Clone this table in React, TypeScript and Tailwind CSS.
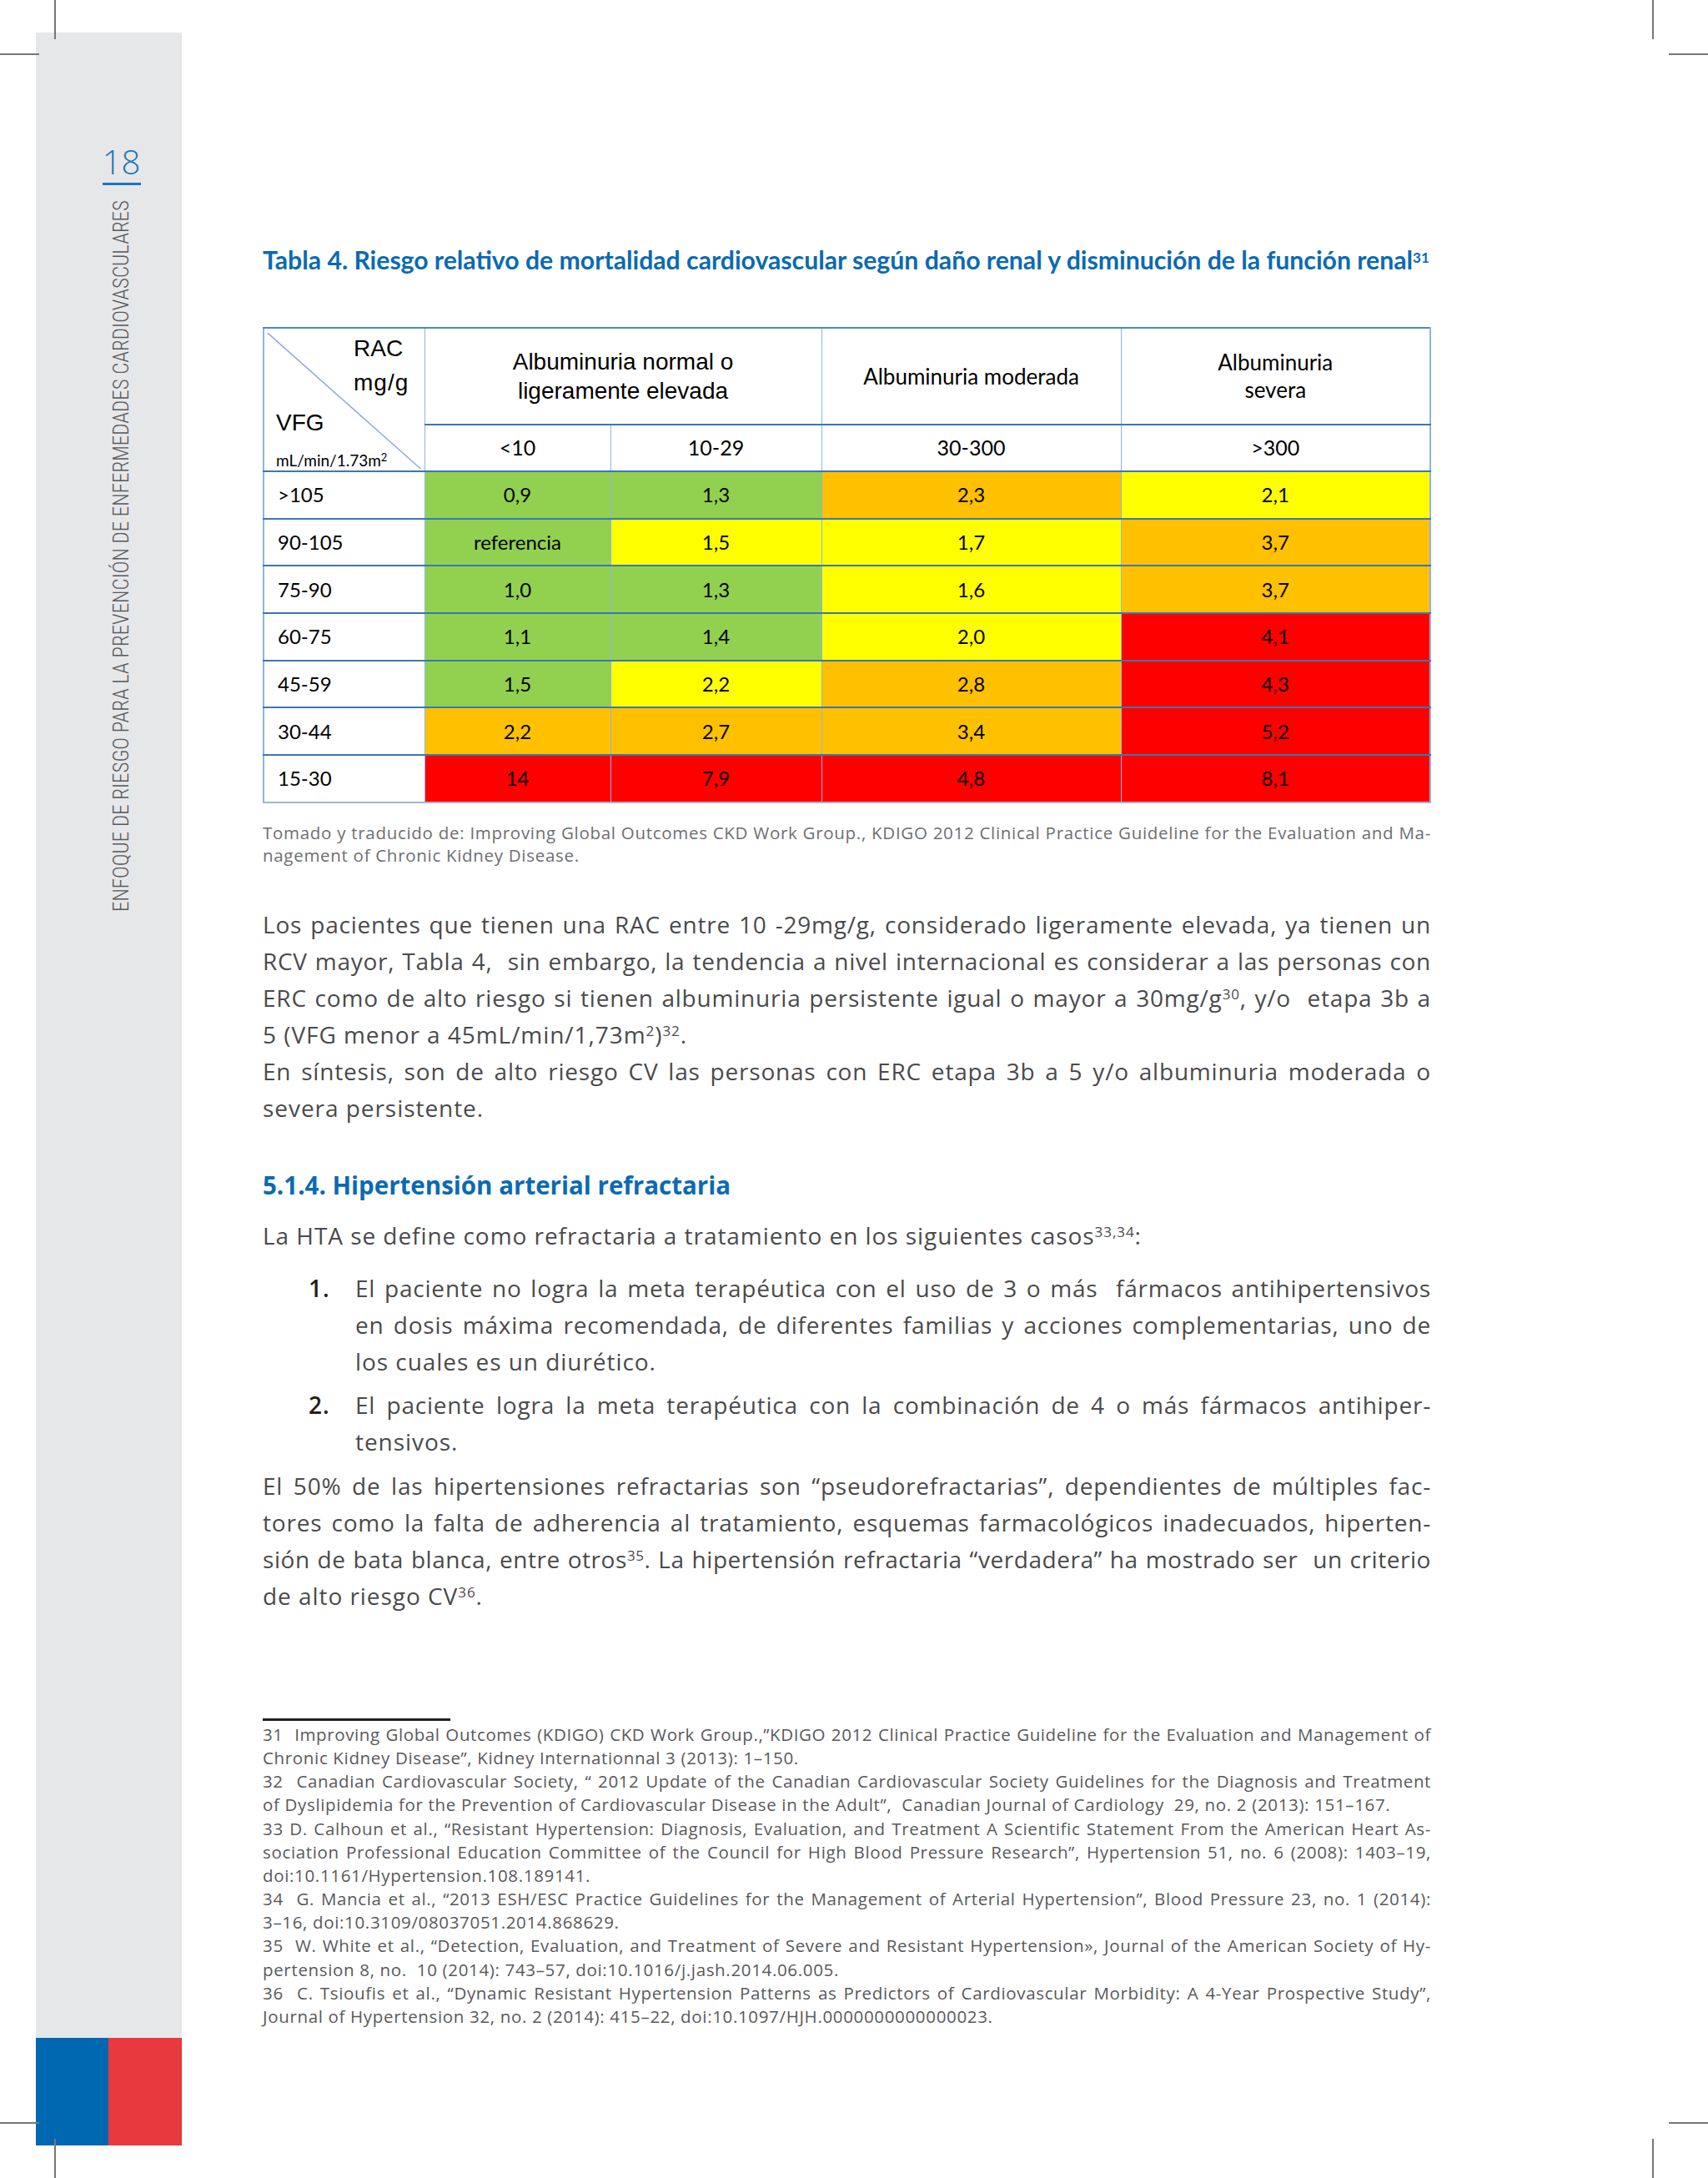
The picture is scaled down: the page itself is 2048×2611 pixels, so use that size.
import { JSX, ReactNode } from "react";

const cellColor: Record<string, string> = {
  g: "bg-[#92d050]",
  y: "bg-[#ffff00]",
  o: "bg-[#ffc000]",
  r: "bg-[#ff0000]",
};

const rows: [string, [string, string][]][] = [
  [">105", [["0,9", "g"], ["1,3", "g"], ["2,3", "o"], ["2,1", "y"]]],
  ["90-105", [["referencia", "g"], ["1,5", "y"], ["1,7", "y"], ["3,7", "o"]]],
  ["75-90", [["1,0", "g"], ["1,3", "g"], ["1,6", "y"], ["3,7", "o"]]],
  ["60-75", [["1,1", "g"], ["1,4", "g"], ["2,0", "y"], ["4,1", "r"]]],
  ["45-59", [["1,5", "g"], ["2,2", "y"], ["2,8", "o"], ["4,3", "r"]]],
  ["30-44", [["2,2", "o"], ["2,7", "o"], ["3,4", "o"], ["5,2", "r"]]],
  ["15-30", [["14", "r"], ["7,9", "r"], ["4,8", "r"], ["8,1", "r"]]],
];

const vb = "border-x border-x-[#8db4e2]";
const hb = "border-b-2 border-b-[#3b77b2]";

function Line({ children, last = false, className = "" }: { children: ReactNode; last?: boolean; className?: string }): JSX.Element {
  return (
    <div className={`${last ? "whitespace-nowrap" : "whitespace-nowrap text-justify [text-align-last:justify]"} ${className}`}>
      {children}
    </div>
  );
}

function CropMarks(): JSX.Element {
  return (
    <>
      <div className="absolute left-[65px] top-0 h-[47px] w-[2px] bg-[#777]" />
      <div className="absolute left-0 top-[64px] h-[2px] w-[47px] bg-[#777]" />
      <div className="absolute left-[1981px] top-0 h-[47px] w-[2px] bg-[#777]" />
      <div className="absolute left-[2001px] top-[64px] h-[2px] w-[47px] bg-[#777]" />
      <div className="absolute left-0 top-[2544px] h-[2px] w-[47px] bg-[#777]" />
      <div className="absolute left-[65px] top-[2564px] h-[47px] w-[2px] bg-[#777]" />
      <div className="absolute left-[2001px] top-[2544px] h-[2px] w-[47px] bg-[#777]" />
      <div className="absolute left-[1981px] top-[2564px] h-[47px] w-[2px] bg-[#777]" />
    </>
  );
}

function Sidebar(): JSX.Element {
  return (
    <aside className="ml-[43px] mt-[39px] flex w-[175px] shrink-0 flex-col">
      <div className="flex h-[2404px] flex-col items-center bg-[#e6e7e8] pl-[30px] pt-[135px]">
        <div className="text-[40px] font-light leading-none text-[#1b75bc]">18</div>
        <div className="mt-[5px] h-[3px] w-[46px] bg-[#1b75bc]" />
        <div className="mt-[18px] rotate-180 whitespace-nowrap font-['Roboto_Condensed',sans-serif] text-[25px] font-light leading-none text-[#58595b] [writing-mode:vertical-rl]">
          ENFOQUE DE RIESGO PARA LA PREVENCIÓN DE ENFERMEDADES CARDIOVASCULARES
        </div>
      </div>
      <div className="flex h-[129px]">
        <div className="w-[87px] bg-[#0067b1]" />
        <div className="flex-1 bg-[#e8393f]" />
      </div>
    </aside>
  );
}

function RiskTable(): JSX.Element {
  return (
    <table className="mt-[63px] w-[1399px] table-fixed border-collapse font-['Lato',sans-serif] text-black">
      <colgroup>
        <col className="w-[193px]" />
        <col className="w-[223px]" />
        <col className="w-[253px]" />
        <col className="w-[359px]" />
        <col className="w-[371px]" />
      </colgroup>
      <thead>
        <tr className="h-[116px]">
          <th
            rowSpan={2}
            className={`relative border-t-2 border-t-[#4a88c9] border-l-2 border-l-[#8db4e2] border-r border-r-[#8db4e2] ${hb} p-0 align-top font-normal`}
          >
            <svg className="absolute inset-0 h-full w-full" viewBox="0 0 100 100" preserveAspectRatio="none">
              <line x1="2" y1="3" x2="98" y2="99" stroke="#8eaadb" strokeWidth="1.5" vectorEffect="non-scaling-stroke" />
            </svg>
            <div className="flex h-[170px] flex-col text-left">
              <div className="pl-[107px] pt-[3px] font-['Liberation_Sans',Arial,sans-serif] text-[28px] leading-[41px]">
                RAC
                <br />
                <span className="tracking-[1px]">mg/g</span>
              </div>
              <div className="mt-auto pl-[14px] font-['Liberation_Sans',Arial,sans-serif] text-[28px] leading-[30px]">VFG</div>
              <div className="mt-[19px] mb-[1px] pl-[14px] text-[19px] leading-[22px]">
                mL/min/1.73m<sup className="text-[13px]">2</sup>
              </div>
            </div>
          </th>
          <th colSpan={2} className={`border-t-2 border-t-[#4a88c9] ${vb} ${hb} font-['Liberation_Sans',Arial,sans-serif] text-[28px] font-normal leading-[35px]`}>
            Albuminuria normal o
            <br />
            ligeramente elevada
          </th>
          <th className={`border-t-2 border-t-[#4a88c9] ${vb} ${hb} text-[26px] font-normal`}>Albuminuria moderada</th>
          <th className={`border-t-2 border-t-[#4a88c9] border-l border-l-[#8db4e2] border-r-2 border-r-[#8db4e2] ${hb} text-[26px] font-normal leading-[33px]`}>
            Albuminuria
            <br />
            severa
          </th>
        </tr>
        <tr className="h-[56px] text-[25px]">
          <th className={`${vb} ${hb} font-normal`}>&lt;10</th>
          <th className={`${vb} ${hb} font-normal`}>10-29</th>
          <th className={`${vb} ${hb} font-normal`}>30-300</th>
          <th className={`border-l border-l-[#8db4e2] border-r-2 border-r-[#8db4e2] ${hb} font-normal`}>&gt;300</th>
        </tr>
      </thead>
      <tbody className="text-[24px]">
        {rows.map(([label, cells], i) => {
          const bottom = i === rows.length - 1 ? "border-b-2 border-b-[#9fb6d3]" : hb;
          return (
            <tr key={label} className="h-[56.7px]">
              <td className={`border-l-2 border-l-[#8db4e2] border-r border-r-[#8db4e2] ${bottom} bg-white pl-[16px]`}>{label}</td>
              {cells.map(([v, c], j) => (
                <td
                  key={j}
                  className={`${j === 3 ? "border-l border-l-[#8db4e2] border-r-2 border-r-[#8db4e2]" : vb} ${bottom} ${cellColor[c]} text-center`}
                >
                  {v}
                </td>
              ))}
            </tr>
          );
        })}
      </tbody>
    </table>
  );
}

function Footnotes(): JSX.Element {
  return (
    <div className="mt-[2px] text-[20.5px] leading-[28.17px] tracking-[0.66px] text-[#58595b]">
      <Line className="tracking-[0.6px]">31{"\u00a0 "}Improving Global Outcomes (KDIGO) CKD Work Group.,”KDIGO 2012 Clinical Practice Guideline for the Evaluation and Management of</Line>
      <Line last>Chronic Kidney Disease”, Kidney Internationnal 3 (2013): 1–150.</Line>
      <Line className="tracking-[0.6px]">32{"\u00a0 "}Canadian Cardiovascular Society, “ 2012 Update of the Canadian Cardiovascular Society Guidelines for the Diagnosis and Treatment</Line>
      <Line last>of Dyslipidemia for the Prevention of Cardiovascular Disease in the Adult”,{"\u00a0 "}Canadian Journal of Cardiology{"\u00a0 "}29, no. 2 (2013): 151–167.</Line>
      <Line>33 D. Calhoun et al., “Resistant Hypertension: Diagnosis, Evaluation, and Treatment A Scientific Statement From the American Heart As-</Line>
      <Line>sociation Professional Education Committee of the Council for High Blood Pressure Research”, Hypertension 51, no. 6 (2008): 1403–19,</Line>
      <Line last>doi:10.1161/Hypertension.108.189141.</Line>
      <Line>34{"\u00a0 "}G. Mancia et al., “2013 ESH/ESC Practice Guidelines for the Management of Arterial Hypertension”, Blood Pressure 23, no. 1 (2014):</Line>
      <Line last>3–16, doi:10.3109/08037051.2014.868629.</Line>
      <Line>35{"\u00a0 "}W. White et al., “Detection, Evaluation, and Treatment of Severe and Resistant Hypertension», Journal of the American Society of Hy-</Line>
      <Line last>pertension 8, no.{"\u00a0 "}10 (2014): 743–57, doi:10.1016/j.jash.2014.06.005.</Line>
      <Line>36{"\u00a0 "}C. Tsioufis et al., “Dynamic Resistant Hypertension Patterns as Predictors of Cardiovascular Morbidity: A 4-Year Prospective Study”,</Line>
      <Line last>Journal of Hypertension 32, no. 2 (2014): 415–22, doi:10.1097/HJH.0000000000000023.</Line>
    </div>
  );
}

export default function App(): JSX.Element {
  return (
    <div className="relative h-[2611px] w-[2048px] overflow-hidden bg-white font-['Open_Sans',sans-serif]">
      <CropMarks />
      <div className="flex">
        <Sidebar />
        <main className="ml-[97px] w-[1401px] pt-[293px] text-[#4a4a4c]">
          <h2 className="whitespace-nowrap font-['Lato',sans-serif] text-[30.2px] font-bold leading-[36px] text-[#0a6ab3]">
            Tabla 4. Riesgo relativo de mortalidad cardiovascular según daño renal y disminución de la función renal<sup className="text-[17px]">31</sup>
          </h2>

          <RiskTable />

          <div className="mt-[22px] text-[20.5px] leading-[27px] tracking-[0.7px] text-[#6d6e71]">
            <Line>Tomado y traducido de: Improving Global Outcomes CKD Work Group., KDIGO 2012 Clinical Practice Guideline for the Evaluation and Ma-</Line>
            <Line last>nagement of Chronic Kidney Disease.</Line>
          </div>

          <div className="mt-[47px] text-[28px] leading-[44px] tracking-[0.95px]">
            <Line className="tracking-[0.8px]">Los pacientes que tienen una RAC entre 10 -29mg/g, considerado ligeramente elevada, ya tienen un</Line>
            <Line className="tracking-[0.7px]">RCV mayor, Tabla 4,{"\u00a0 "}sin embargo, la tendencia a nivel internacional es considerar a las personas con</Line>
            <Line className="tracking-[0.8px]">
              ERC como de alto riesgo si tienen albuminuria persistente igual o mayor a 30mg/g<sup className="text-[17px]">30</sup>, y/o{"\u00a0 "}etapa 3b a
            </Line>
            <Line last>
              5 (VFG menor a 45mL/min/1,73m<sup className="text-[17px]">2</sup>)<sup className="text-[17px]">32</sup>.
            </Line>
            <Line className="tracking-[0.8px]">En síntesis, son de alto riesgo CV las personas con ERC etapa 3b a 5 y/o albuminuria moderada o</Line>
            <Line last>severa persistente.</Line>
          </div>

          <h3 className="mt-[49px] text-[29.5px] font-bold leading-[44px] text-[#0a6ab3]">5.1.4. Hipertensión arterial refractaria</h3>

          <div className="mt-[16px] text-[28px] leading-[44px] tracking-[0.95px]">
            <Line last>
              La HTA se define como refractaria a tratamiento en los siguientes casos<sup className="text-[17px]">33,34</sup>:
            </Line>
          </div>

          <ol className="mt-[19px] flex flex-col gap-[8px] text-[28px] leading-[44px] tracking-[0.95px]">
            <li className="flex">
              <span className="w-[111px] shrink-0 pl-[55px] font-semibold text-[#231f20]">1.</span>
              <div className="w-[1290px]">
                <Line className="tracking-[0.8px]">El paciente no logra la meta terapéutica con el uso de 3 o más{"\u00a0 "}fármacos antihipertensivos</Line>
                <Line className="tracking-[0.8px]">en dosis máxima recomendada, de diferentes familias y acciones complementarias, uno de</Line>
                <Line last>los cuales es un diurético.</Line>
              </div>
            </li>
            <li className="flex">
              <span className="w-[111px] shrink-0 pl-[55px] font-semibold text-[#231f20]">2.</span>
              <div className="w-[1290px]">
                <Line className="tracking-[0.8px]">El paciente logra la meta terapéutica con la combinación de 4 o más fármacos antihiper-</Line>
                <Line last>tensivos.</Line>
              </div>
            </li>
          </ol>

          <div className="mt-[9px] text-[28px] leading-[44px] tracking-[0.95px]">
            <Line className="tracking-[0.8px]">El 50% de las hipertensiones refractarias son “pseudorefractarias”, dependientes de múltiples fac-</Line>
            <Line className="tracking-[0.8px]">tores como la falta de adherencia al tratamiento, esquemas farmacológicos inadecuados, hiperten-</Line>
            <Line className="tracking-[0.55px]">
              sión de bata blanca, entre otros<sup className="text-[17px]">35</sup>. La hipertensión refractaria “verdadera” ha mostrado ser{"\u00a0 "}un criterio
            </Line>
            <Line last>
              de alto riesgo CV<sup className="text-[17px]">36</sup>.
            </Line>
          </div>

          <div className="mt-[125px] h-[3px] w-[225px] bg-[#231f20]" />
          <Footnotes />
        </main>
      </div>
    </div>
  );
}
